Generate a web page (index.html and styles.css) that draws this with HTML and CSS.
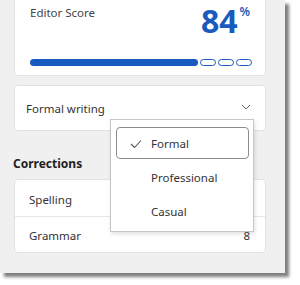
FILE: index.html
```html
<!DOCTYPE html>
<html lang="en">
<head>
    <meta charset="UTF-8">
    <title>Editor</title>
    <link rel="stylesheet" href="styles.css">
</head>
<body>
    <div class="pane">
        <!-- Score card -->
        <div class="card score-card">
            <div class="score-head">
                <span class="score-label">Editor Score</span>
                <span class="score-value">84<sup>%</sup></span>
            </div>
            <div class="score-bar">
                <div class="bar-fill"></div>
                <div class="bar-pill"></div>
                <div class="bar-pill"></div>
                <div class="bar-pill"></div>
            </div>
        </div>

        <!-- Style select -->
        <div class="card select-card">
            <span>Formal writing</span>
            <svg class="chevron" width="10" height="6" viewBox="0 0 10 6">
                <path d="M1 1 L5 5 L9 1" fill="none" stroke="#666" stroke-width="1"/>
            </svg>
        </div>

        <h3 class="section-title">Corrections</h3>
        <div class="card list-card">
            <div class="list-row"><span>Spelling</span><span></span></div>
            <div class="list-row"><span>Grammar</span><span>8</span></div>
        </div>

        <!-- Open dropdown -->
        <div class="menu">
            <div class="menu-item selected">
                <svg class="check" width="12" height="10" viewBox="0 0 12 10">
                    <path d="M1 5 L4.5 8.5 L11 1.5" fill="none" stroke="#555" stroke-width="1.1"/>
                </svg>
                <span>Formal</span>
            </div>
            <div class="menu-item"><span>Professional</span></div>
            <div class="menu-item"><span>Casual</span></div>
        </div>
    </div>
</body>
</html>
```

FILE: styles.css
```css
* {
    margin: 0;
    padding: 0;
    box-sizing: border-box;
}

html, body {
    height: 100%;
    overflow: hidden;
    background: #ffffff;
    font-family: 'Noto Sans', sans-serif;
    color: #333;
}

/* Grey side pane */
.pane {
    position: relative;
    display: flow-root; /* keep the card's negative margin inside */
    width: 285px;
    height: 273px;
    background: #f0f0f0;
    padding: 0 19px 0 14px;
    box-shadow: 4px 4px 3px rgba(0, 0, 0, 0.5);
}

.card {
    background: #fff;
    border: 1px solid #e2e2e2;
    border-radius: 4px;
}

/* Score card */
.score-card {
    margin-top: -10px;
    height: 86px;
    padding: 14px 13px 0 15px;
}

.score-head {
    display: flex;
    justify-content: space-between;
    align-items: flex-start;
    padding-right: 2px;
}

.score-label {
    font-size: 11.5px;
    line-height: 16px;
    color: #444;
}

.score-value {
    font-size: 32px;
    line-height: 32px;
    font-weight: 700;
    color: #185abd;
}

.score-value sup {
    font-size: 12px;
    font-weight: 600;
    vertical-align: top;
    line-height: 14px;
    margin-left: 2px;
}

.score-bar {
    display: flex;
    gap: 2px;
    margin-top: 22px;
    height: 7px;
}

.bar-fill {
    flex: 1;
    background: #185abd;
    border-radius: 4px;
}

.bar-pill {
    width: 16px;
    border: 1.5px solid #185abd;
    border-radius: 4px;
}

/* Select */
.select-card {
    margin-top: 9px;
    height: 46px;
    display: flex;
    align-items: center;
    justify-content: space-between;
    padding: 0 14px 0 11px;
    font-size: 11.5px;
    color: #333;
}

.chevron {
    margin-top: -2px;
}

.section-title {
    font-size: 12px;
    font-weight: 700;
    color: #222;
    margin-top: 25px;
    line-height: 16px;
    margin-left: -1px;
}

/* Corrections list */
.list-card {
    margin-top: 7px;
}

.list-row {
    height: 36px;
    display: flex;
    align-items: center;
    justify-content: space-between;
    padding: 2px 15px 0 14px;
    font-size: 11.5px;
    color: #333;
}

.list-row + .list-row {
    border-top: 1px solid #e6e6e6;
}

/* Dropdown menu over the pane */
.menu {
    position: absolute;
    left: 110px;
    top: 119px;
    width: 144px;
    height: 113px;
    background: #fff;
    border: 1px solid #c6c6c6;
    box-shadow: 1px 2px 4px rgba(0, 0, 0, 0.12);
    padding: 7px 4px 0 5px;
    display: flex;
    flex-direction: column;
    gap: 2px;
}

.menu-item {
    height: 32px;
    display: flex;
    align-items: center;
    padding-left: 34px;
    font-size: 11.5px;
    color: #333;
    position: relative;
    border: 1px solid transparent;
    border-radius: 4px;
}

.menu-item.selected {
    border-color: #8c8c8c;
}

.check {
    position: absolute;
    left: 13px;
    top: 11px;
}
```
